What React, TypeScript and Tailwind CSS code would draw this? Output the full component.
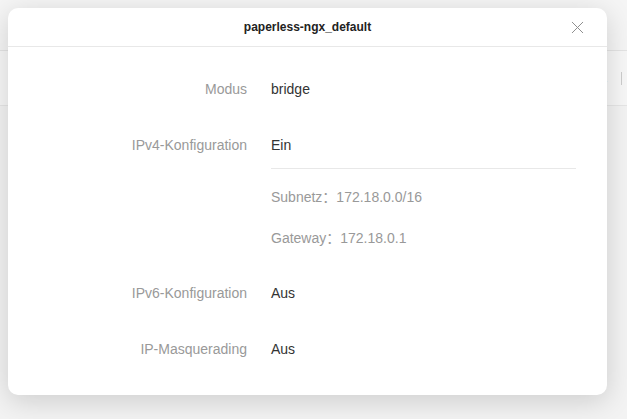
import { X } from "lucide-react";

const font = { fontFamily: '"Liberation Sans", Arial, "Noto Sans CJK SC", sans-serif' };

function Row({ label, value, className }: { label: string; value: string; className?: string }) {
  return (
    <div className={`flex h-4 items-center leading-4 ${className ?? ""}`}>
      <div className="w-[239px] shrink-0 text-right text-[#999]">{label}</div>
      <div className="ml-6 text-[#333]">{value}</div>
    </div>
  );
}

function SubRow({ text, className }: { text: string; className?: string }) {
  return (
    <div className={`flex h-4 items-center leading-4 ${className ?? ""}`}>
      <div className="w-[239px] shrink-0" />
      <div className="ml-6 text-[#999]">{text}</div>
    </div>
  );
}

export default function App() {
  return (
    <div className="relative h-[419px] w-[627px] overflow-hidden bg-[#f3f3f3] text-[14px]" style={font}>
      {/* page behind the dialog */}
      <div className="h-[51px] border-b border-[#e4e4e4] bg-[#f5f5f5]" />
      <div className="flex h-[55px] items-center justify-end gap-[6px] border-b border-[#e6e6e6] bg-[#f7f7f7] pr-[5px] text-[12px] text-[#bbb]">
        <span>帮助、</span>
        <span className="h-[13px] w-px bg-[#ccc]" />
      </div>

      {/* dialog */}
      <div className="absolute left-2 top-2 flex h-[387px] w-[599px] flex-col rounded-[10px] bg-white shadow-[0_6px_28px_rgba(0,0,0,0.16)]">
        <div className="relative flex h-[39px] shrink-0 items-center justify-center border-b border-[#e8e8e8]">
          <span className="text-[12px] font-bold text-[#222]">paperless-ngx_default</span>
          <button className="absolute right-[19px] top-[9px] text-[#8a8a8a]">
            <X size={21} strokeWidth={1.1} />
          </button>
        </div>
        <div className="flex flex-col pt-[34px]">
          <Row label="Modus" value="bridge" />
          <Row label="IPv4-Konfiguration" value="Ein" className="mt-10" />
          <div className="mt-[15px] flex">
            <div className="w-[239px] shrink-0" />
            <div className="ml-6 mr-[31px] h-px flex-1 bg-[#e8e8e8]" />
          </div>
          <SubRow text="Subnetz：172.18.0.0/16" className="mt-5" />
          <SubRow text="Gateway：172.18.0.1" className="mt-[25px]" />
          <Row label="IPv6-Konfiguration" value="Aus" className="mt-[39px]" />
          <Row label="IP-Masquerading" value="Aus" className="mt-10" />
        </div>
      </div>
    </div>
  );
}
